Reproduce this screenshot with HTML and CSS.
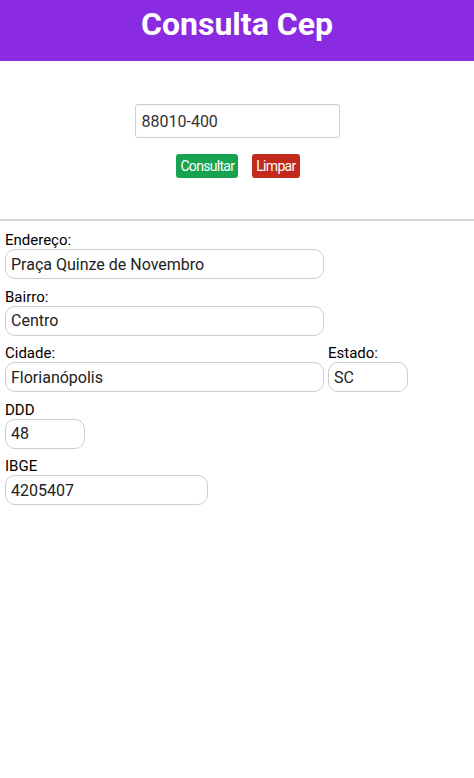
FILE: index.html
```html
<!DOCTYPE html>
<html lang="pt-BR">
<head>
<meta charset="utf-8">
<title>Consulta Cep</title>
<link rel="stylesheet" href="styles.css">
</head>
<body>
<header class="topbar">
  <h1 class="title">Consulta Cep</h1>
</header>
<section class="search">
  <input class="cep-input" type="text" value="88010-400">
  <div class="actions">
    <button class="btn btn-green" type="button">Consultar</button>
    <button class="btn btn-red" type="button">Limpar</button>
  </div>
</section>
<hr class="divider">
<form class="fields">
  <div class="field">
    <label class="label">Endereço:</label>
    <input class="input w-long" type="text" value="Praça Quinze de Novembro">
  </div>
  <div class="field">
    <label class="label">Bairro:</label>
    <input class="input w-long" type="text" value="Centro">
  </div>
  <div class="row">
    <div class="field">
      <label class="label">Cidade:</label>
      <input class="input w-long" type="text" value="Florianópolis">
    </div>
    <div class="field">
      <label class="label">Estado:</label>
      <input class="input w-short" type="text" value="SC">
    </div>
  </div>
  <div class="field">
    <label class="label">DDD</label>
    <input class="input w-short" type="text" value="48">
  </div>
  <div class="field">
    <label class="label">IBGE</label>
    <input class="input w-mid" type="text" value="4205407">
  </div>
</form>
</body>
</html>
```
FILE: styles.css
```css
* { box-sizing: border-box; }
body {
  margin: 0;
  font-family: Roboto, "Liberation Sans", sans-serif;
  background: #fff;
  color: #111;
}
.topbar {
  background: #8a2be2;
  height: 61px;
  padding-top: 6px;
}
.title {
  margin: 0;
  color: #fff;
  font-size: 32px;
  font-weight: 700;
  line-height: 37px;
  text-align: center;
}
.search {
  padding-top: 43px;
  display: flex;
  flex-direction: column;
  align-items: center;
}
.cep-input {
  width: 205px;
  height: 34px;
  border: 1px solid #cfcfcf;
  border-radius: 3px;
  padding: 0 6px;
  font-family: Roboto, "Liberation Sans", sans-serif;
  font-size: 16px;
  color: #333;
  box-shadow: inset 0 1px 1px rgba(0,0,0,0.05);
}
.actions {
  margin-top: 16px;
  display: flex;
  gap: 14px;
  margin-left: 2px;
}
.btn {
  height: 24px;
  border: none;
  border-radius: 3px;
  padding: 0 4px;
  font-family: Roboto, "Liberation Sans", sans-serif;
  font-size: 14px;
  letter-spacing: -0.7px;
  color: #fff;
}
.btn-green { background: #17a34f; }
.btn-red { background: #c22a1b; }
.divider {
  margin: 41px 0 0;
  border: none;
  border-top: 2px solid #d6d6d6;
  height: 0;
}
.fields {
  padding: 11px 5px 0;
}
.field {
  margin-bottom: 9.5px;
}
.label {
  display: block;
  font-size: 15px;
  line-height: 17px;
  color: #000;
}
.input {
  display: block;
  height: 30px;
  border: 1px solid #cdcdcd;
  border-radius: 10px;
  padding: 0 5px;
  font-family: Roboto, "Liberation Sans", sans-serif;
  font-size: 16px;
  color: #222;
  background: #fff;
}
.w-long { width: 319px; }
.w-short { width: 80px; }
.w-mid { width: 203px; }
.row {
  display: flex;
  gap: 4px;
}
```
